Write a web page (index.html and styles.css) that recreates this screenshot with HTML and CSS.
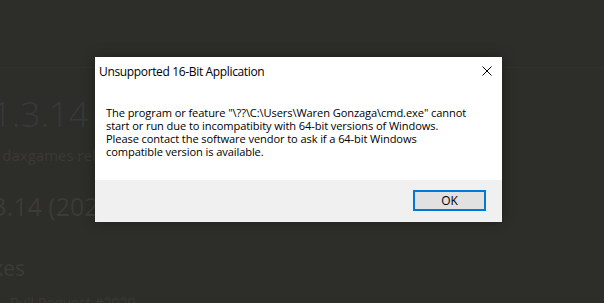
FILE: index.html
```html
<!DOCTYPE html>
<html lang="en">
<head>
    <meta charset="UTF-8">
    <title>Unsupported 16-Bit Application</title>
    <link rel="stylesheet" href="styles.css">
</head>
<body>
    <div class="page">
        <div class="page-header"></div>
        <div class="release">
            <h1 class="release-tag">v1.3.14</h1>
            <p class="release-meta">@ daxgames released this on 2020</p>
            <h2 class="release-title">v1.3.14 (2020-03-30)</h2>
            <h3 class="release-section">Fixes</h3>
            <p class="release-item">Pull Request #2029</p>
        </div>
    </div>

    <div class="dialog">
        <div class="dialog-body">
            <div class="dialog-titlebar">
                <span class="dialog-title">Unsupported 16-Bit Application</span>
                <svg class="dialog-close" width="10" height="10" viewBox="0 0 10 10">
                    <path d="M0.5 0.5 L9.5 9.5 M9.5 0.5 L0.5 9.5" stroke="#000" stroke-width="1" fill="none"/>
                </svg>
            </div>
            <p class="dialog-message">The program or feature "\??\C:\Users\Waren Gonzaga\cmd.exe" cannot<br>
                start or run due to incompatibity with 64-bit versions of Windows.<br>
                Please contact the software vendor to ask if a 64-bit Windows<br>
                compatible version is available.</p>
        </div>
        <div class="dialog-footer">
            <button class="dialog-button">OK</button>
        </div>
    </div>
</body>
</html>
```

FILE: styles.css
```css
* {
    margin: 0;
    padding: 0;
    box-sizing: border-box;
}

body {
    background: #2d2d29;
    width: 604px;
    height: 303px;
    overflow: hidden;
    font-family: 'Open Sans', 'Noto Sans', sans-serif;
}

/* dimmed page behind the dialog */
.page {
    margin-left: -24px;
}

.page-header {
    height: 68px;
    border-bottom: 1px solid #31312d;
}

.release {
    padding-top: 26px;
}

.release-tag {
    font-size: 35px;
    font-weight: 300;
    line-height: 40px;
    color: #363a3d;
}

.release-meta {
    margin-top: 11px;
    padding-left: 9px;
    font-size: 15px;
    line-height: 20px;
    color: #3a3a36;
}

.release-title {
    margin-top: 24px;
    margin-left: -17px;
    font-size: 25px;
    font-weight: 400;
    line-height: 34px;
    color: #3b3b37;
}

.release-section {
    margin-top: 31px;
    margin-left: 0;
    font-size: 21px;
    font-weight: 400;
    line-height: 28px;
    color: #3b3b37;
}

.release-item {
    margin-top: 11px;
    padding-left: 34px;
    font-size: 14px;
    color: #3a3a36;
}

/* the message box */
.dialog {
    position: absolute;
    left: 95px;
    top: 57px;
    width: 407px;
    height: 165px;
    display: flex;
    flex-direction: column;
    box-shadow: 0 0 12px rgba(0, 0, 0, 0.35);
    font-family: 'Open Sans', 'Noto Sans', sans-serif;
    font-size: 11.1px;
    color: #000;
}

.dialog-body {
    background: #fff;
    height: 123px;
}

.dialog-titlebar {
    display: flex;
    justify-content: space-between;
    align-items: center;
    height: 26px;
    padding: 0 10px 0 4px;
}

.dialog-title {
    font-size: 12px;
    letter-spacing: -0.35px;
    padding-top: 2px;
}

.dialog-close {
    display: block;
    margin-top: 1px;
}

.dialog-message {
    margin-top: 23px;
    padding: 0 0 0 11px;
    line-height: 13px;
    letter-spacing: -0.1px;
    white-space: nowrap;
}

.dialog-footer {
    flex: 1;
    background: #f0f0f0;
    display: flex;
    justify-content: flex-end;
    align-items: flex-start;
    padding: 10px 16px 0 0;
}

.dialog-button {
    width: 73px;
    height: 21px;
    background: #e1e1e1;
    border: 2px solid #0078d7;
    font-family: inherit;
    font-size: 12px;
    color: #000;
}
```
